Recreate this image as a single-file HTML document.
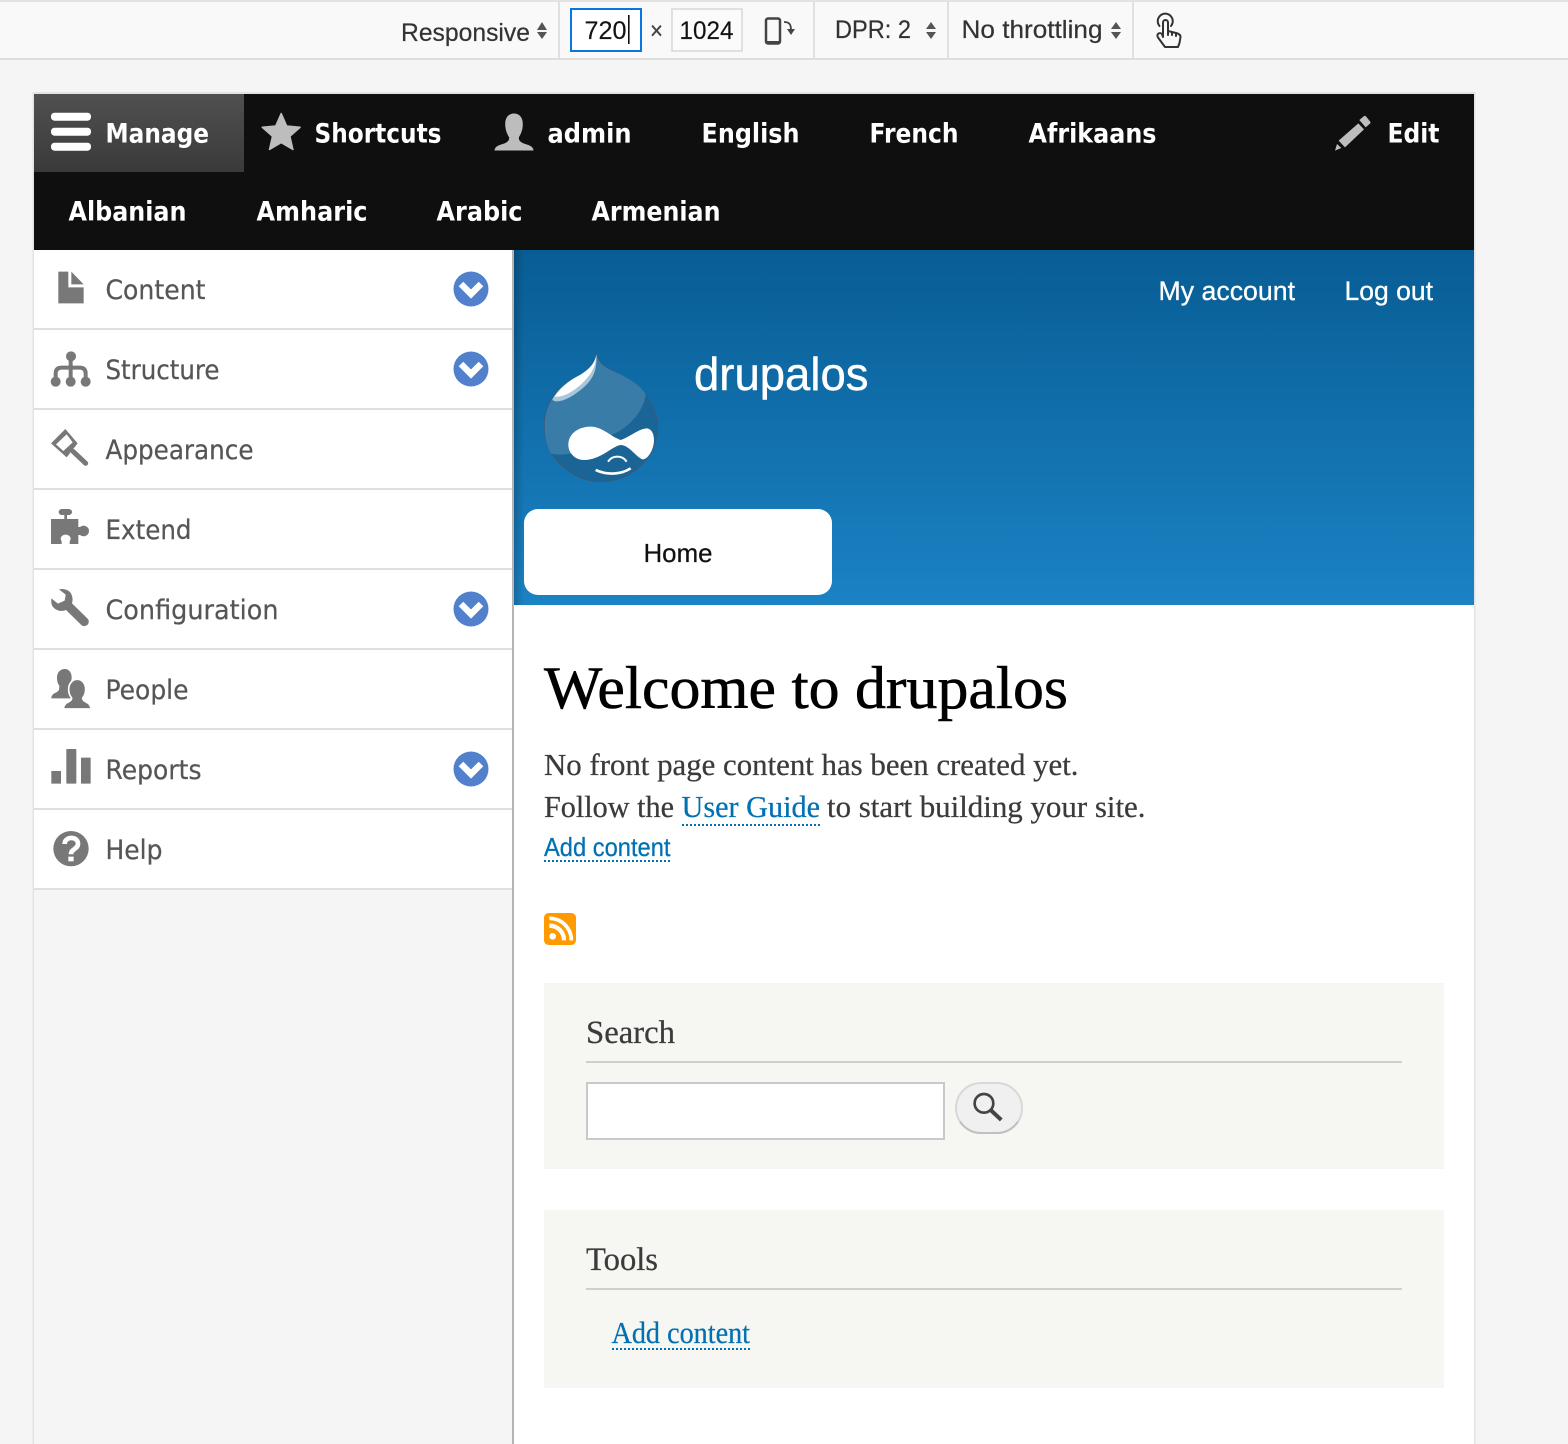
<!DOCTYPE html>
<html lang="en">
<head>
<meta charset="utf-8">
<title>drupalos</title>
<style>
html,body{margin:0;padding:0;background:#f5f5f5;width:1568px;height:1444px;overflow:hidden}
svg{display:block}
.d{font-family:"Liberation Sans",sans-serif;fill:#333;font-size:25px;stroke:#333;stroke-width:.2px}
.t{font-family:"DejaVu Sans",sans-serif;font-weight:700;fill:#fff;font-size:27px}
.m{font-family:"DejaVu Sans",sans-serif;fill:#565656;font-size:27px;stroke:#565656;stroke-width:.25px}
.h{font-family:"Liberation Sans",sans-serif;fill:#fff;font-size:27px;stroke:#fff;stroke-width:.3px}
.s{font-family:"Liberation Serif",serif;fill:#3b3b3b;font-size:31px;stroke:#3b3b3b;stroke-width:.25px}
.i{fill:#787878}
</style>
</head>
<body>
<svg xmlns="http://www.w3.org/2000/svg" width="1568" height="1444" viewBox="0 0 1568 1444">
<defs>
<linearGradient id="mg" x1="0" y1="0" x2="0" y2="1"><stop offset="0" stop-color="#505050"/><stop offset="1" stop-color="#3a3a3a"/></linearGradient>
<linearGradient id="hg" x1="0" y1="0" x2="0" y2="1"><stop offset="0" stop-color="#085d94"/><stop offset="1" stop-color="#1b82c4"/></linearGradient>
<linearGradient id="sg" x1="0" y1="0" x2="1" y2="0"><stop offset="0" stop-color="#000" stop-opacity=".18"/><stop offset="1" stop-color="#000" stop-opacity="0"/></linearGradient>
</defs>

<!-- responsive toolbar -->
<rect width="1568" height="1444" fill="#f5f5f5"/>
<rect width="1568" height="59" fill="#f9f9f9"/>
<rect width="1568" height="2" fill="#e2e2e2"/>
<rect y="58" width="1568" height="2" fill="#dedede"/>
<g fill="#e0e0e0">
<rect x="558" y="2" width="2" height="56"/><rect x="813" y="2" width="2" height="56"/><rect x="947" y="2" width="2" height="56"/><rect x="1132" y="2" width="2" height="56"/>
</g>
<text class="d" x="401" y="41" textLength="129" lengthAdjust="spacingAndGlyphs">Responsive</text>
<path d="M537 30l5-8 5 8zM537 32l5 7 5-7z" fill="#555"/>
<rect x="571" y="9" width="70" height="42" fill="#fff" stroke="#0a74e0" stroke-width="2"/>
<text class="d" x="584.500" y="39" textLength="42" lengthAdjust="spacingAndGlyphs" style="fill:#111">720</text>
<rect x="628" y="15" width="1.6" height="29" fill="#111"/>
<text class="d" x="650" y="39" textLength="13" lengthAdjust="spacingAndGlyphs" style="fill:#444">×</text>
<rect x="672" y="9" width="70" height="42" fill="#fbfbfb" stroke="#e0e0e0" stroke-width="2"/>
<text class="d" x="679.500" y="39" textLength="54" lengthAdjust="spacingAndGlyphs" style="fill:#111">1024</text>
<rect x="766" y="18.500" width="14" height="25" rx="2" fill="none" stroke="#444" stroke-width="2.500"/>
<rect x="766" y="41" width="14" height="3" fill="#444"/>
<path d="M784 22c5 0 7 2 7 8" fill="none" stroke="#444" stroke-width="1.800"/>
<path d="M787 29h8l-4 6z" fill="#444"/>
<text class="d" x="835" y="38" textLength="76" lengthAdjust="spacingAndGlyphs">DPR: 2</text>
<path d="M926 29l5-7 5 7zM926 32l5 7 5-7z" fill="#555"/>
<text class="d" x="961.500" y="38" textLength="141" lengthAdjust="spacingAndGlyphs">No throttling</text>
<path d="M1111 29l5-7 5 7zM1111 32l5 7 5-7z" fill="#555"/>
<g fill="none" stroke="#333" stroke-width="2" stroke-linejoin="round" stroke-linecap="round">
<path d="M1163 37V22.500a2.500 2.500 0 0 1 5 0V31l8 2c3 .7 4.500 2 4.500 4l-1 6-1.500 4h-13l-7-9.500c-2-3 1.500-6 4-3.500z"/>
<path d="M1168 31v4M1172 32v3M1176 33v3"/>
<path d="M1159.500 26a7.500 7.500 0 1 1 11.500 0"/>
</g>

<!-- viewport frame -->
<rect x="32.500" y="92" width="1443" height="1352" fill="#e3e3e3"/>
<rect x="34" y="94" width="1440" height="1350" fill="#fff"/>

<!-- admin toolbar -->
<rect x="34" y="94" width="1440" height="156" fill="#0f0f0f"/>
<rect x="34" y="94" width="210" height="78" fill="url(#mg)"/>
<g fill="#fff">
<rect x="51" y="112.700" width="40" height="8" rx="3.500"/>
<rect x="51" y="127.700" width="40" height="8" rx="3.500"/>
<rect x="51" y="142.700" width="40" height="8" rx="3.500"/>
</g>
<text class="t" x="105.500" y="142.500" textLength="103.500" lengthAdjust="spacingAndGlyphs">Manage</text>
<path d="M281.200 113.500l5.500 12.500 13.400 1.300-10.200 9 3 13.200-11.700-6.900-11.700 6.900 3-13.200-10.200-9 13.400-1.300z" fill="#bdbdbd" stroke="#bdbdbd" stroke-width="1.500" stroke-linejoin="round"/>
<text class="t" x="314.500" y="142.500" textLength="127" lengthAdjust="spacingAndGlyphs">Shortcuts</text>
<path d="M514 113.500c5.500 0 8.800 4 8.800 10.500 0 6-2 10-4 13.500 0 3 1.500 4.500 5 6 4 1.500 8.700 2 9.700 6.500v.5h-39v-.5c1-4.500 5.700-5 9.700-6.500 3.500-1.500 5-3 5-6-2-3.500-4-7.500-4-13.500 0-6.500 3.300-10.500 8.800-10.500z" fill="#bdbdbd"/>
<text class="t" x="547.500" y="142.500" textLength="84" lengthAdjust="spacingAndGlyphs">admin</text>
<text class="t" x="701.500" y="142.500" textLength="98" lengthAdjust="spacingAndGlyphs">English</text>
<text class="t" x="869.500" y="142.500" textLength="89" lengthAdjust="spacingAndGlyphs">French</text>
<text class="t" x="1028.500" y="142.500" textLength="128" lengthAdjust="spacingAndGlyphs">Afrikaans</text>
<g transform="translate(1300,100) scale(.3333)" fill="#bdbdbd">
<path d="M178 60l13-11q4-3 7 0l12 15q3 4 0 7l-13 11z"/>
<path d="M116 122l59-52 17 18-57 54z"/>
<path d="M105 152l6-20 13 12z"/>
</g>
<text class="t" x="1387.500" y="142.500" textLength="52" lengthAdjust="spacingAndGlyphs">Edit</text>
<text class="t" x="68.500" y="220.500" textLength="118" lengthAdjust="spacingAndGlyphs">Albanian</text>
<text class="t" x="256.500" y="220.500" textLength="111" lengthAdjust="spacingAndGlyphs">Amharic</text>
<text class="t" x="436.500" y="220.500" textLength="86" lengthAdjust="spacingAndGlyphs">Arabic</text>
<text class="t" x="591.500" y="220.500" textLength="129" lengthAdjust="spacingAndGlyphs">Armenian</text>

<!-- sidebar -->
<rect x="34" y="250" width="478" height="1194" fill="#f5f5f5"/>
<rect x="34" y="250" width="478" height="640" fill="#fff"/>
<g fill="#dfdfdf">
<rect x="34" y="328" width="478" height="2"/><rect x="34" y="408" width="478" height="2"/><rect x="34" y="488" width="478" height="2"/><rect x="34" y="568" width="478" height="2"/><rect x="34" y="648" width="478" height="2"/><rect x="34" y="728" width="478" height="2"/><rect x="34" y="808" width="478" height="2"/><rect x="34" y="888" width="478" height="2"/>
</g>
<rect x="512" y="250" width="2" height="1194" fill="#b4b4b4"/>

<g transform="translate(34,250) scale(.3333)" class="i">
<path d="M73 65h30v47h46v48H73zM112 65l37 38h-37z"/>
<circle cx="111" cy="319" r="15"/><circle cx="65" cy="395" r="15"/><circle cx="110" cy="395" r="15"/><circle cx="155" cy="395" r="15"/>
<path d="M110 319v76M65 395v-24q0-18 18-18h54q18 0 18 18v24" fill="none" stroke="#787878" stroke-width="12"/>
<path fill-rule="evenodd" d="M51 580l43-43 37 43-33 42zM66 583l22 20 28-26-18-24z"/>
<path d="M118 605l37 35" stroke="#787878" stroke-width="15" stroke-linecap="round" fill="none"/>
<path d="M51 807h40v-12H82q-8-2-8-9t8-9h24q8 2 8 9t-8 9h-7v12h34v24h5q8-6 16-3 11 4 11 15t-11 15q-8 3-16-3h-5v27h-26v-8q6-8 0-15-5-5-12-5t-12 5q-6 7 0 15v8H51z"/>
</g>
<g transform="translate(34,570) scale(.3333)" class="i">
<path d="M75 58C90 55 108 60 113 75c4 10 3 18 1 25l46 45a13 13 0 0 1-18 20L96 120c-16 7-34 0-41-12-3-6-4-13-3-23l20 16 20-9 3-18z"/>
<path d="M92 297c13 0 21 11 21 25 0 10-5 19-10 25 0 6 4 9 12 13 8 4 12 10 13 25H52c0-10 6-14 15-18 7-3 9-7 9-20-5-6-7-15-7-25 0-14 10-25 23-25z"/>
<path d="M130 328c15 0 25 13 25 30 0 11-4 20-9 26 0 6 4 9 10 12 8 3 14 8 15 21H88c1-13 7-18 15-21 6-3 10-6 10-12-5-6-9-15-9-26 0-17 11-30 26-30z" stroke="#fff" stroke-width="5"/>
<rect x="52" y="603" width="29" height="38"/>
<rect x="97" y="537" width="30" height="104" rx="2"/>
<rect x="141" y="563" width="29" height="78" rx="2"/>
<circle cx="111" cy="836" r="53"/>
<path d="M92 822c0-24 40-24 40-1 0 17-21 15-21 32" fill="none" stroke="#fff" stroke-width="14"/>
<rect x="103" y="860" width="16" height="14" fill="#fff"/>
</g>

<text class="m" x="105.500" y="299" textLength="100" lengthAdjust="spacingAndGlyphs">Content</text>
<text class="m" x="105.500" y="379" textLength="114" lengthAdjust="spacingAndGlyphs">Structure</text>
<text class="m" x="105.500" y="459" textLength="148" lengthAdjust="spacingAndGlyphs">Appearance</text>
<text class="m" x="105.500" y="539" textLength="86" lengthAdjust="spacingAndGlyphs">Extend</text>
<text class="m" x="105.500" y="619" textLength="173" lengthAdjust="spacingAndGlyphs">Configuration</text>
<text class="m" x="105.500" y="699" textLength="83" lengthAdjust="spacingAndGlyphs">People</text>
<text class="m" x="105.500" y="779" textLength="96" lengthAdjust="spacingAndGlyphs">Reports</text>
<text class="m" x="105.500" y="859" textLength="57" lengthAdjust="spacingAndGlyphs">Help</text>

<g fill="#5181cd">
<circle cx="471" cy="289" r="17.500"/><circle cx="471" cy="369" r="17.500"/><circle cx="471" cy="609" r="17.500"/><circle cx="471" cy="769" r="17.500"/>
</g>
<g fill="none" stroke="#fff" stroke-width="6.500">
<path d="M461 284l10 10 10-10"/><path d="M461 364l10 10 10-10"/><path d="M461 604l10 10 10-10"/><path d="M461 764l10 10 10-10"/>
</g>

<!-- site header -->
<rect x="514" y="250" width="960" height="355" fill="url(#hg)"/>
<rect x="514" y="250" width="10" height="355" fill="url(#sg)"/>
<text class="h" x="1158.500" y="300" textLength="136.500" lengthAdjust="spacingAndGlyphs">My account</text>
<text class="h" x="1344.500" y="300" textLength="88.500" lengthAdjust="spacingAndGlyphs">Log out</text>
<text x="694" y="390" textLength="174.500" lengthAdjust="spacingAndGlyphs" style="font-family:'Liberation Sans',sans-serif;font-size:46px;fill:#fff;stroke:#fff;stroke-width:.4px">drupalos</text>

<g transform="translate(514,340) scale(.3333)">
<path d="M248 40c2 20 14 35 42 50 60 25 141 90 141 170 0 90-76 165-169 165-92 0-171-75-171-167 0-78 49-123 109-153 25-15 45-35 48-65z" fill="#1a6596" stroke="#3c5a75" stroke-width="3"/>
<path d="M248 42c2 20 14 33 42 48 40 17 85 40 105 72-6 58-60 110-115 128-60 50-130 60-170 50-12-25-18-50-18-82 0-78 49-123 109-153 25-15 45-33 47-63z" fill="#3a7ca8"/>
<path d="M247 44c-3 25-22 45-47 60-36 18-66 40-85 74 6 12 36 6 66-14 34-24 54-44 62-72 4-15 5-33 4-48z" fill="#a9c6da"/>
<path d="M247 44c-3 25-22 45-47 60-34 17-60 38-78 66 34 4 82-32 108-70 11-17 17-36 17-56z" fill="#fff"/>
<path d="M163 315c0-35 32-55 67-55 35 0 60 30 90 40 30-10 55-35 80-35 15 3 20 20 20 35 0 30-20 60-35 58-20-8-40-43-65-43-25 3-60 45-110 45-25 0-47-20-47-45z" fill="#fff"/>
<path d="M245 390c30 15 75 15 105-5" fill="none" stroke="#fff" stroke-width="8"/>
<path d="M282 365c13-20 43-20 56 0" fill="none" stroke="#fff" stroke-width="6"/>
</g>

<rect x="524" y="509" width="308" height="86" rx="14" fill="#fff"/>
<text x="643.500" y="562" textLength="69" lengthAdjust="spacingAndGlyphs" style="font-family:'Liberation Sans',sans-serif;font-size:26px;fill:#111;stroke:#111;stroke-width:.25px">Home</text>

<!-- content -->
<text x="544" y="708" textLength="524" lengthAdjust="spacingAndGlyphs" style="font-family:'Liberation Serif',serif;font-size:60px;fill:#000;stroke:#000;stroke-width:.6px">Welcome to drupalos</text>
<text class="s" x="544" y="775" textLength="534.500" lengthAdjust="spacingAndGlyphs">No front page content has been created yet.</text>
<text class="s" x="544" y="817" textLength="130" lengthAdjust="spacingAndGlyphs">Follow the</text>
<text class="s" x="681.500" y="817" textLength="138.500" lengthAdjust="spacingAndGlyphs" style="fill:#0071b3;stroke:#0071b3">User Guide</text>
<text class="s" x="827" y="817" textLength="318.500" lengthAdjust="spacingAndGlyphs">to start building your site.</text>
<path d="M682 825h138" stroke="#0071b3" stroke-width="2" stroke-dasharray="2 2"/>
<text x="544" y="856" textLength="126.500" lengthAdjust="spacingAndGlyphs" style="font-family:'Liberation Sans',sans-serif;font-size:26px;fill:#0071b3;stroke:#0071b3;stroke-width:.25px">Add content</text>
<path d="M544 861h127" stroke="#0071b3" stroke-width="2" stroke-dasharray="2 2"/>

<g transform="translate(530,900) scale(.3333)">
<rect x="42" y="39" width="96" height="96" rx="14" fill="#ff9a00"/>
<circle cx="68" cy="109" r="10" fill="#fff"/>
<path d="M58 77c25 0 44 19 44 44" fill="none" stroke="#fff" stroke-width="13"/>
<path d="M58 55c37 0 66 29 66 66" fill="none" stroke="#fff" stroke-width="11"/>
</g>

<rect x="544" y="983" width="900" height="186" fill="#f6f6f2"/>
<text class="s" x="586" y="1043" textLength="89" lengthAdjust="spacingAndGlyphs" style="font-size:33px">Search</text>
<rect x="586" y="1061" width="816" height="2" fill="#cfcfcf"/>
<rect x="587" y="1083" width="357" height="56" fill="#fff" stroke="#c9c9c9" stroke-width="2"/>
<rect x="956" y="1083" width="66" height="50" rx="25" fill="#f0f0f0" stroke="#d8d8d8" stroke-width="2"/>
<path d="M960 1121.600A25 25 0 0 0 981 1133h16a25 25 0 0 0 21-11.400" stroke="#c0c0c0" stroke-width="2" fill="none"/>
<g transform="translate(530,900) scale(.3333)">
<circle cx="1362" cy="610" r="28" fill="none" stroke="#444" stroke-width="8"/>
<path d="M1382 630l32 30" stroke="#444" stroke-width="12"/>
</g>

<rect x="544" y="1210" width="900" height="178" fill="#f6f6f2"/>
<text class="s" x="586" y="1270" textLength="72" lengthAdjust="spacingAndGlyphs" style="font-size:33px">Tools</text>
<rect x="586" y="1288" width="816" height="2" fill="#cfcfcf"/>
<text class="s" x="611.500" y="1343" textLength="138.500" lengthAdjust="spacingAndGlyphs" style="fill:#0071b3;stroke:#0071b3">Add content</text>
<path d="M612 1349h138" stroke="#0071b3" stroke-width="2" stroke-dasharray="2 2"/>
</svg>
</body>
</html>
